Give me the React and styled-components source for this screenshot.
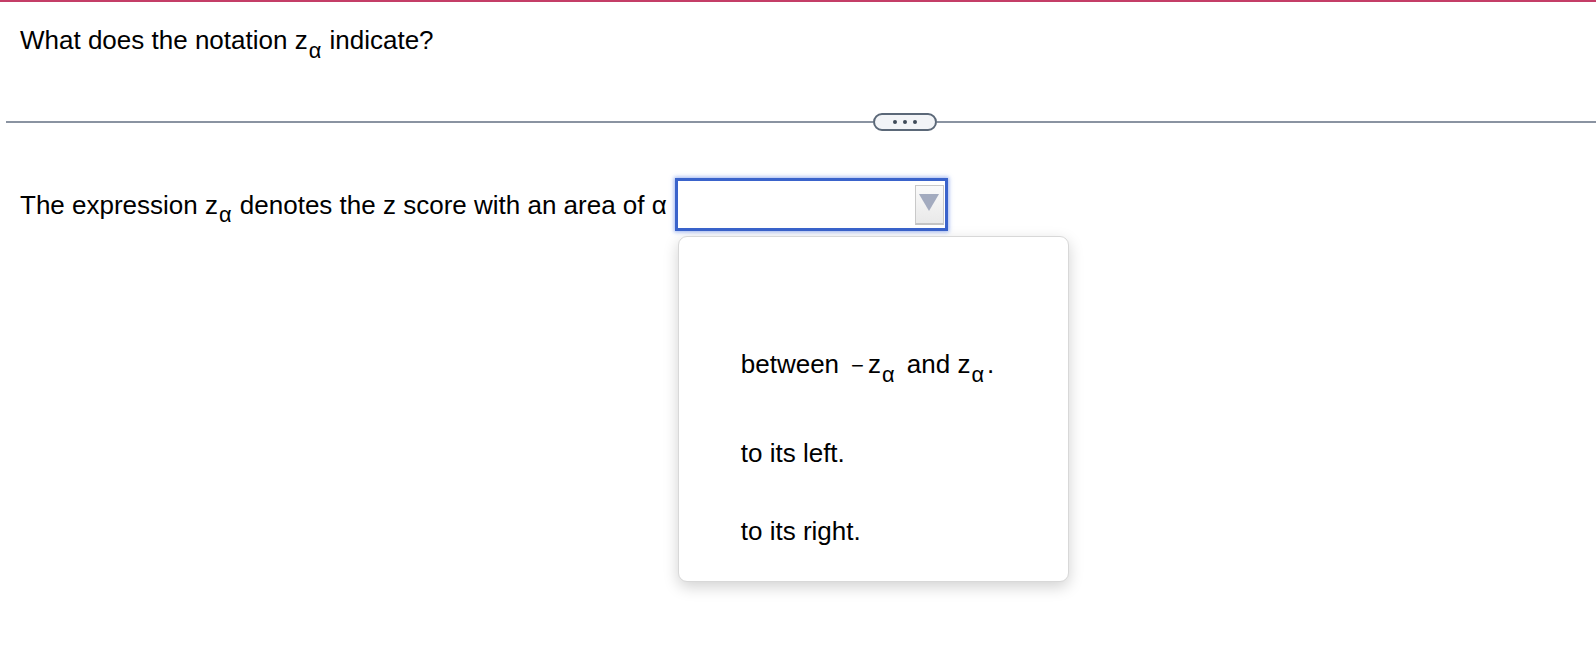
import styled, { createGlobalStyle } from "styled-components";

const GlobalStyle = createGlobalStyle`
    html, body {
        margin: 0;
        padding: 0;
        background: #fff;
    }
    body {
        font-family: "Liberation Sans", Arial, Helvetica, sans-serif;
        color: #000;
    }
`;

const Page = styled.div`
    width: 1596px;
    min-height: 658px;
    border-top: 2px solid #c43d67;
    box-sizing: border-box;
`;

const Question = styled.p`
    margin: 0;
    padding: 23px 0 0 20px;
    font-size: 26px;
    line-height: 30px;
`;

const Sub = styled.span`
    font-size: 0.84em;
    line-height: 0;
    vertical-align: -0.4em;
    margin: 0 ${({ $after }) => $after ?? 1}px 0 1px;
`;

const Minus = styled.span`
    font-size: 22px;
    margin: 0 4px 0 12px;
`;

const Divider = styled.div`
    display: flex;
    align-items: center;
    height: 18px;
    margin: 58px 0 0 6px;
`;

const Rule = styled.div`
    height: 2px;
    background: #8a93a1;
    flex: ${({ $grow }) => ($grow ? "1" : "0 0 867px")};
`;

const MorePill = styled.button`
    display: flex;
    align-items: center;
    justify-content: center;
    gap: 6px;
    width: 64px;
    height: 18px;
    padding: 0;
    border: 2px solid #5b6878;
    border-radius: 9px;
    background: #f2f4f7;
    box-sizing: border-box;

    span {
        width: 4px;
        height: 4px;
        border-radius: 50%;
        background: #3f4b59;
    }
`;

const AnswerRow = styled.div`
    display: flex;
    align-items: center;
    margin-top: 47px;
    padding-left: 20px;
    font-size: 26px;
    line-height: 30px;
`;

const SelectWrap = styled.div`
    position: relative;
    margin-left: 8px;
`;

const SelectBox = styled.div`
    display: flex;
    align-items: center;
    justify-content: flex-end;
    width: 273px;
    height: 53px;
    padding-right: 1px;
    border: 3px solid #3a63cb;
    box-shadow: 0 0 4px 1px rgba(90, 130, 230, 0.6);
    background: #fff;
    box-sizing: border-box;
`;

const ArrowButton = styled.div`
    display: flex;
    align-items: center;
    justify-content: center;
    width: 29px;
    height: 40px;
    padding-bottom: 3px;
    border: 1px solid #c9c9c9;
    border-bottom: 2px solid #c4c4c4;
    background: linear-gradient(#fafafa, #e9e9e9);
    box-sizing: border-box;

    &::after {
        content: "";
        border-left: 10px solid transparent;
        border-right: 10px solid transparent;
        border-top: 17px solid #a3abbf;
    }
`;

const Menu = styled.div`
    position: absolute;
    top: 58px;
    left: 3px;
    width: 391px;
    padding-bottom: 10px;
    border: 1px solid #d8d8d8;
    border-radius: 9px;
    background: #fff;
    box-shadow: 0 5px 15px rgba(0, 0, 0, 0.18);
    box-sizing: border-box;
`;

const Option = styled.div`
    height: ${({ $tall }) => ($tall ? 89 : 78)}px;
    padding: 23px 0 0 62px;
    font-size: 26px;
    line-height: 30px;
    white-space: nowrap;
    box-sizing: border-box;
`;

const Z = ({ after }) => (
    <>
        z<Sub $after={after}>α</Sub>
    </>
);

export default function App() {
    return (
        <>
            <GlobalStyle />
            <Page>
                <Question>
                    What does the notation <Z /> indicate?
                </Question>
                <Divider>
                    <Rule />
                    <MorePill aria-label="more">
                        <span />
                        <span />
                        <span />
                    </MorePill>
                    <Rule $grow />
                </Divider>
                <AnswerRow>
                    <span>
                        The expression <Z /> denotes the z score with an area of α
                    </span>
                    <SelectWrap>
                        <SelectBox>
                            <ArrowButton />
                        </SelectBox>
                        <Menu>
                            <Option $tall />
                            <Option $tall>
                                between<Minus>−</Minus>
                                <Z after={5} /> and <Z after={3} />.
                            </Option>
                            <Option>to its left.</Option>
                            <Option>to its right.</Option>
                        </Menu>
                    </SelectWrap>
                </AnswerRow>
            </Page>
        </>
    );
}
